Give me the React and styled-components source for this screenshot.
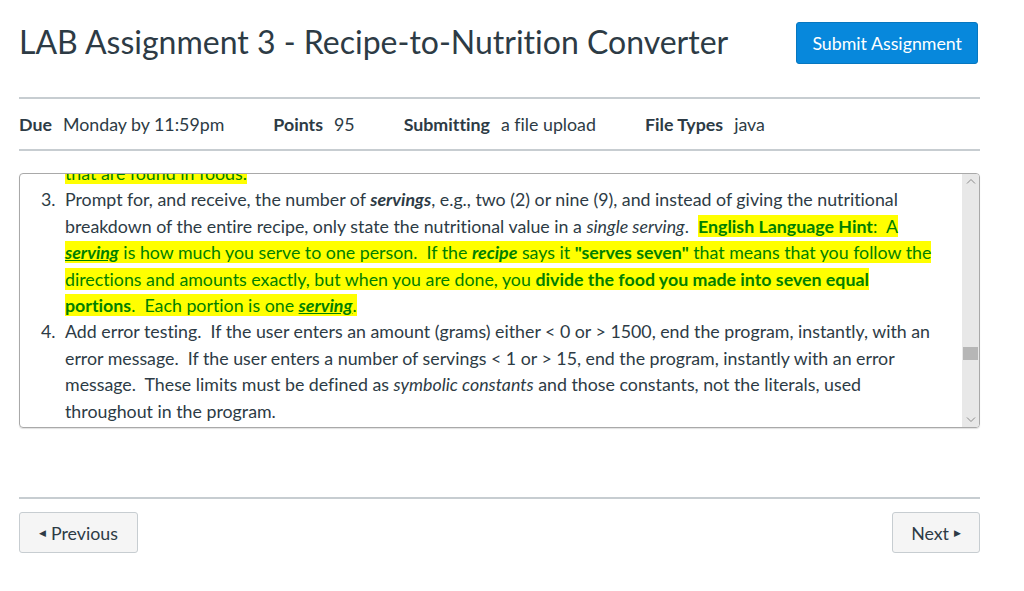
import React from "react";
import styled, { createGlobalStyle } from "styled-components";

const GlobalStyle = createGlobalStyle`
  html, body {
    margin: 0;
    padding: 0;
    background: #ffffff;
  }
  body {
    font-family: Lato, "Open Sans", "Liberation Sans", sans-serif;
    font-variant-ligatures: none;
    color: #2d3b45;
  }
  button {
    font-variant-ligatures: none;
  }
`;

const Page = styled.div`
  width: 961px;
  padding: 22px 0 0 19px;
`;

const Header = styled.div`
  display: flex;
  justify-content: space-between;
  align-items: center;
  height: 41px;
`;

const Title = styled.h1`
  margin: -2px 0 0;
  font-size: 32px;
  font-weight: 400;
  color: #2d3b45;
`;

const SubmitButton = styled.button`
  height: 42px;
  margin-right: 2px;
  padding: 0 15px;
  font-family: inherit;
  font-size: 17.8px;
  color: #ffffff;
  background: #0788dc;
  border: 1px solid #0677c0;
  border-radius: 3px;
`;

const Rule = styled.hr`
  margin: ${(p) => p.$top || 0}px 0 0;
  border: 0;
  height: 2px;
  background: #c7cdd1;
`;

const Details = styled.ul`
  display: flex;
  align-items: center;
  height: 50px;
  margin: 0;
  padding: 0;
  list-style: none;
  font-size: 17.8px;
`;

const Detail = styled.li`
  margin-right: 49px;
  display: flex;
  gap: 11px;
`;

const Label = styled.span`
  font-weight: 700;
`;

const Box = styled.div`
  display: flex;
  margin-top: 22px;
  height: 253px;
  border: 1px solid #a9a9a9;
  border-radius: 4px;
  box-shadow: 0 1px 1px rgba(0, 0, 0, 0.12);
  overflow: hidden;
`;

const Viewport = styled.div`
  flex: 1;
  overflow: hidden;
`;

const List = styled.ol`
  margin: -14px 0 0;
  padding: 0 16px 0 40px;
  font-size: 17.8px;
  line-height: 26.4px;
  color: #2d3b45;
`;

const Item = styled.li`
  padding-left: 5px;
  list-style: ${(p) => (p.$plain ? "none" : "decimal")};
`;

const Hi = styled.span`
  background: #ffff00;
  color: #008000;
`;

const Under = styled.span`
  font-weight: 700;
  font-style: italic;
  text-decoration: underline;
`;

const Scrollbar = styled.div`
  position: relative;
  width: 17px;
  background: #e8e8e8;
  display: flex;
  flex-direction: column;
  justify-content: space-between;
  align-items: center;
  padding: 4px 0;
`;

const Arrow = styled.svg`
  width: 10px;
  height: 6px;
`;

const Thumb = styled.div`
  position: absolute;
  left: 1px;
  right: 1px;
  top: 173px;
  height: 13px;
  background: #b6b6b6;
`;

const Nav = styled.div`
  display: flex;
  justify-content: space-between;
  margin-top: 13px;
`;

const NavButton = styled.button`
  height: 41px;
  padding: 0 ${(p) => p.$pad}px;
  font-family: inherit;
  font-size: 17.8px;
  color: #2d3b45;
  background: #f5f5f5;
  border: 1px solid #c7cdd1;
  border-radius: 3px;
  display: flex;
  align-items: center;
  gap: 5px;
`;

const Tri = styled.span`
  font-size: 9px;
`;

const App = () => {
  return (
    <>
      <GlobalStyle />
      <Page>
        <Header>
          <Title>LAB Assignment 3 - Recipe-to-Nutrition Converter</Title>
          <SubmitButton>Submit Assignment</SubmitButton>
        </Header>
        <Rule $top={34} />
        <Details>
          <Detail>
            <Label>Due</Label>
            <span>Monday by 11:59pm</span>
          </Detail>
          <Detail>
            <Label>Points</Label>
            <span>95</span>
          </Detail>
          <Detail>
            <Label>Submitting</Label>
            <span>a file upload</span>
          </Detail>
          <Detail>
            <Label>File Types</Label>
            <span>java</span>
          </Detail>
        </Details>
        <Rule />
        <Box>
          <Viewport>
            <List start={2}>
              <Item $plain>
                <Hi>that are found in foods.</Hi>
              </Item>
              <Item>
                Prompt for, and receive, the number of{" "}
                <b>
                  <i>servings</i>
                </b>
                , e.g., two (2) or nine (9), and instead of giving the nutritional
                breakdown of the entire recipe, only state the nutritional value in a{" "}
                <i>single serving</i>.&nbsp;{" "}
                <Hi>
                  <b>English Language Hint</b>:&nbsp; A <Under>serving</Under> is how
                  much you serve to one person.&nbsp; If the{" "}
                  <b>
                    <i>recipe</i>
                  </b>{" "}
                  says it <b>"serves seven"</b> that means that you follow the
                  directions and amounts exactly, but when you are done, you{" "}
                  <b>divide the food you made into seven equal portions</b>.&nbsp;
                  Each portion is one <Under>serving</Under>.
                </Hi>
              </Item>
              <Item>
                Add error testing.&nbsp; If the user enters an amount (grams) either
                &lt; 0 or &gt; 1500, end the program, instantly, with an error
                message.&nbsp; If the user enters a number of servings &lt; 1 or &gt;
                15, end the program, instantly with an error message.&nbsp; These
                limits must be defined as <i>symbolic constants</i> and those
                constants, not the literals, used throughout in the program.
              </Item>
            </List>
          </Viewport>
          <Scrollbar>
            <Arrow viewBox="0 0 10 6">
              <path d="M1 5.5 L5 1.5 L9 5.5" fill="none" stroke="#8a8a8a" strokeWidth="1" />
            </Arrow>
            <Thumb />
            <Arrow viewBox="0 0 10 6">
              <path d="M1 0.5 L5 4.5 L9 0.5" fill="none" stroke="#8a8a8a" strokeWidth="1" />
            </Arrow>
          </Scrollbar>
        </Box>
        <Rule $top={69} />
        <Nav>
          <NavButton $pad={19}>
            <Tri>◀</Tri>Previous
          </NavButton>
          <NavButton $pad={18}>
            Next<Tri>▶</Tri>
          </NavButton>
        </Nav>
      </Page>
    </>
  );
};

export default App;
